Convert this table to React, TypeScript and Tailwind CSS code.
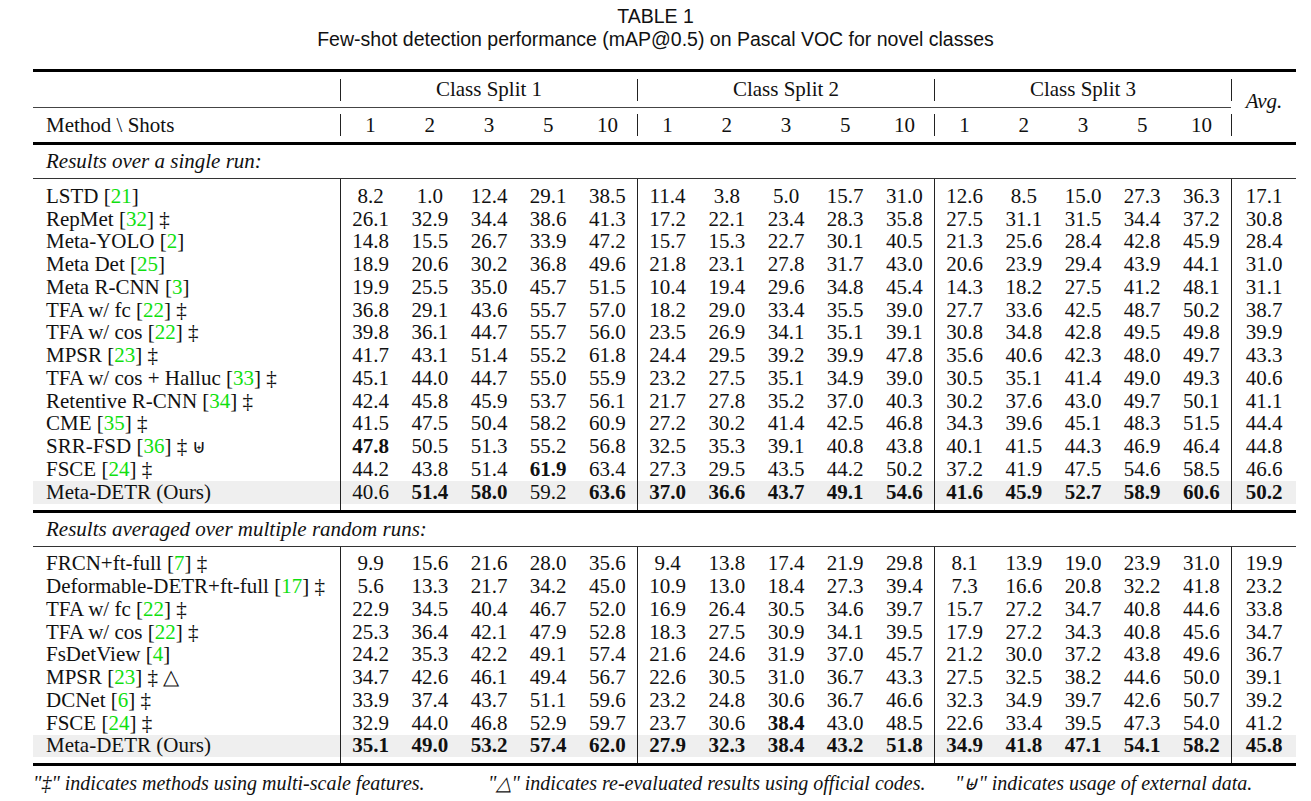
import React from 'react';

type Cell = { v: string; b?: boolean };
type Row = { name: React.ReactNode; vals: Cell[]; hl?: boolean };

const serif = { fontFamily: '"Liberation Serif", "Times New Roman", serif' };

// parse "40.6 *51.4 ..." — a star marks a bold value
const parse = (s: string): Cell[] =>
  s.split(' ').map(t => (t.startsWith('*') ? { v: t.slice(1), b: true } : { v: t }));

const Cite = ({ n }: { n: string }) => (
  <>
    [<span className="text-[#10e010]">{n}</span>]
  </>
);

const single: Row[] = [
  { name: <>LSTD <Cite n="21" /></>, vals: parse('8.2 1.0 12.4 29.1 38.5 11.4 3.8 5.0 15.7 31.0 12.6 8.5 15.0 27.3 36.3 17.1') },
  { name: <>RepMet <Cite n="32" /> ‡</>, vals: parse('26.1 32.9 34.4 38.6 41.3 17.2 22.1 23.4 28.3 35.8 27.5 31.1 31.5 34.4 37.2 30.8') },
  { name: <>Meta-YOLO <Cite n="2" /></>, vals: parse('14.8 15.5 26.7 33.9 47.2 15.7 15.3 22.7 30.1 40.5 21.3 25.6 28.4 42.8 45.9 28.4') },
  { name: <>Meta Det <Cite n="25" /></>, vals: parse('18.9 20.6 30.2 36.8 49.6 21.8 23.1 27.8 31.7 43.0 20.6 23.9 29.4 43.9 44.1 31.0') },
  { name: <>Meta R-CNN <Cite n="3" /></>, vals: parse('19.9 25.5 35.0 45.7 51.5 10.4 19.4 29.6 34.8 45.4 14.3 18.2 27.5 41.2 48.1 31.1') },
  { name: <>TFA w/ fc <Cite n="22" /> ‡</>, vals: parse('36.8 29.1 43.6 55.7 57.0 18.2 29.0 33.4 35.5 39.0 27.7 33.6 42.5 48.7 50.2 38.7') },
  { name: <>TFA w/ cos <Cite n="22" /> ‡</>, vals: parse('39.8 36.1 44.7 55.7 56.0 23.5 26.9 34.1 35.1 39.1 30.8 34.8 42.8 49.5 49.8 39.9') },
  { name: <>MPSR <Cite n="23" /> ‡</>, vals: parse('41.7 43.1 51.4 55.2 61.8 24.4 29.5 39.2 39.9 47.8 35.6 40.6 42.3 48.0 49.7 43.3') },
  { name: <>TFA w/ cos + Halluc <Cite n="33" /> ‡</>, vals: parse('45.1 44.0 44.7 55.0 55.9 23.2 27.5 35.1 34.9 39.0 30.5 35.1 41.4 49.0 49.3 40.6') },
  { name: <>Retentive R-CNN <Cite n="34" /> ‡</>, vals: parse('42.4 45.8 45.9 53.7 56.1 21.7 27.8 35.2 37.0 40.3 30.2 37.6 43.0 49.7 50.1 41.1') },
  { name: <>CME <Cite n="35" /> ‡</>, vals: parse('41.5 47.5 50.4 58.2 60.9 27.2 30.2 41.4 42.5 46.8 34.3 39.6 45.1 48.3 51.5 44.4') },
  { name: <>SRR-FSD <Cite n="36" /> ‡ <span className="text-[19px]">⊎</span></>, vals: parse('*47.8 50.5 51.3 55.2 56.8 32.5 35.3 39.1 40.8 43.8 40.1 41.5 44.3 46.9 46.4 44.8') },
  { name: <>FSCE <Cite n="24" /> ‡</>, vals: parse('44.2 43.8 51.4 *61.9 63.4 27.3 29.5 43.5 44.2 50.2 37.2 41.9 47.5 54.6 58.5 46.6') },
  { name: 'Meta-DETR (Ours)', hl: true, vals: parse('40.6 *51.4 *58.0 59.2 *63.6 *37.0 *36.6 *43.7 *49.1 *54.6 *41.6 *45.9 *52.7 *58.9 *60.6 *50.2') },
];

const averaged: Row[] = [
  { name: <>FRCN+ft-full <Cite n="7" /> ‡</>, vals: parse('9.9 15.6 21.6 28.0 35.6 9.4 13.8 17.4 21.9 29.8 8.1 13.9 19.0 23.9 31.0 19.9') },
  { name: <>Deformable-DETR+ft-full <Cite n="17" /> ‡</>, vals: parse('5.6 13.3 21.7 34.2 45.0 10.9 13.0 18.4 27.3 39.4 7.3 16.6 20.8 32.2 41.8 23.2') },
  { name: <>TFA w/ fc <Cite n="22" /> ‡</>, vals: parse('22.9 34.5 40.4 46.7 52.0 16.9 26.4 30.5 34.6 39.7 15.7 27.2 34.7 40.8 44.6 33.8') },
  { name: <>TFA w/ cos <Cite n="22" /> ‡</>, vals: parse('25.3 36.4 42.1 47.9 52.8 18.3 27.5 30.9 34.1 39.5 17.9 27.2 34.3 40.8 45.6 34.7') },
  { name: <>FsDetView <Cite n="4" /></>, vals: parse('24.2 35.3 42.2 49.1 57.4 21.6 24.6 31.9 37.0 45.7 21.2 30.0 37.2 43.8 49.6 36.7') },
  { name: <>MPSR <Cite n="23" /> ‡ △</>, vals: parse('34.7 42.6 46.1 49.4 56.7 22.6 30.5 31.0 36.7 43.3 27.5 32.5 38.2 44.6 50.0 39.1') },
  { name: <>DCNet <Cite n="6" /> ‡</>, vals: parse('33.9 37.4 43.7 51.1 59.6 23.2 24.8 30.6 36.7 46.6 32.3 34.9 39.7 42.6 50.7 39.2') },
  { name: <>FSCE <Cite n="24" /> ‡</>, vals: parse('32.9 44.0 46.8 52.9 59.7 23.7 30.6 *38.4 43.0 48.5 22.6 33.4 39.5 47.3 54.0 41.2') },
  { name: 'Meta-DETR (Ours)', hl: true, vals: parse('*35.1 *49.0 *53.2 *57.4 *62.0 *27.9 *32.3 *38.4 *43.2 *51.8 *34.9 *41.8 *47.1 *54.1 *58.2 *45.8') },
];

function DataRow({ row }: { row: Row }) {
  const groups = [row.vals.slice(0, 5), row.vals.slice(5, 10), row.vals.slice(10, 15)];
  return (
    <div className={`flex h-[22.75px] items-center ${row.hl ? 'bg-[#efefef]' : ''}`}>
      <div className="w-[307px] pl-[13px] whitespace-nowrap">{row.name}</div>
      {groups.map((g, gi) => (
        <div key={gi} className="flex h-full w-[297px] items-center border-l border-[#222]">
          {g.map((c, ci) => (
            <div key={ci} className={`flex-1 text-center ${c.b ? 'font-bold' : ''}`}>
              {c.v}
            </div>
          ))}
        </div>
      ))}
      <div className={`flex h-full w-[65px] items-center justify-center border-l border-[#222] ${row.vals[15].b ? 'font-bold' : ''}`}>
        {row.vals[15].v}
      </div>
    </div>
  );
}

function Spacer({ h }: { h: string }) {
  return (
    <div className={`flex ${h}`}>
      <div className="w-[307px]" />
      <div className="w-[297px] border-l border-[#222]" />
      <div className="w-[297px] border-l border-[#222]" />
      <div className="w-[297px] border-l border-[#222]" />
      <div className="w-[65px] border-l border-[#222]" />
    </div>
  );
}

function Section({ label, rows }: { label: string; rows: Row[] }) {
  return (
    <>
      <div className="flex h-[33px] items-center pl-[13px] italic">{label}</div>
      <div className="h-px bg-[#333]" />
      <Spacer h="h-[6px]" />
      {rows.map((r, i) => (
        <DataRow key={i} row={r} />
      ))}
      <Spacer h="h-[6px]" />
    </>
  );
}

const Bar = () => <div className="h-[22px] w-px shrink-0 bg-[#222]" />;

export default function App() {
  return (
    <div className="min-h-[801px] w-[1311px] bg-white text-[#111]">
      <div
        className="pt-[5px] text-center text-[19.5px] leading-[23px] text-[#111]"
        style={{ fontFamily: '"Liberation Sans", Arial, sans-serif' }}
      >
        <div>TABLE 1</div>
        <div>Few-shot detection performance (mAP@0.5) on Pascal VOC for novel classes</div>
      </div>

      <div className="ml-[33px] mt-[18px] w-[1263px] text-[21px] leading-none" style={serif}>
        <div className="h-[3px] bg-black" />

        <div className="flex">
          <div className="w-[1198px]">
            <div className="flex h-[35px] items-center">
              <div className="w-[307px]" />
              {['Class Split 1', 'Class Split 2', 'Class Split 3'].map(t => (
                <div key={t} className="flex w-[297px] items-center">
                  <Bar />
                  <div className="flex-1 text-center">{t}</div>
                </div>
              ))}
            </div>
            <div className="h-px bg-[#444]" />
            <div className="flex h-[34px] items-center">
              <div className="w-[307px] pl-[13px]">Method \ Shots</div>
              {[0, 1, 2].map(g => (
                <div key={g} className="flex w-[297px] items-center">
                  <Bar />
                  {['1', '2', '3', '5', '10'].map(n => (
                    <div key={n} className="flex-1 text-center">{n}</div>
                  ))}
                </div>
              ))}
            </div>
          </div>
          <div className="flex w-[65px]">
            <div className="flex flex-col justify-around">
              <Bar />
              <Bar />
            </div>
            <div className="flex flex-1 items-center justify-center pb-[12px] italic">Avg.</div>
          </div>
        </div>

        <div className="h-[3px] bg-black" />
        <Section label="Results over a single run:" rows={single} />
        <div className="h-[3px] bg-black" />
        <Section label="Results averaged over multiple random runs:" rows={averaged} />
        <div className="h-[3px] bg-black" />

        <div className="flex pt-[5px] text-[20px] leading-[24px] italic whitespace-nowrap">
          <div className="w-[455px]">"‡" indicates methods using multi-scale features.</div>
          <div className="w-[467px]">"△" indicates re-evaluated results using official codes.</div>
          <div>"⊎" indicates usage of external data.</div>
        </div>
      </div>
    </div>
  );
}
